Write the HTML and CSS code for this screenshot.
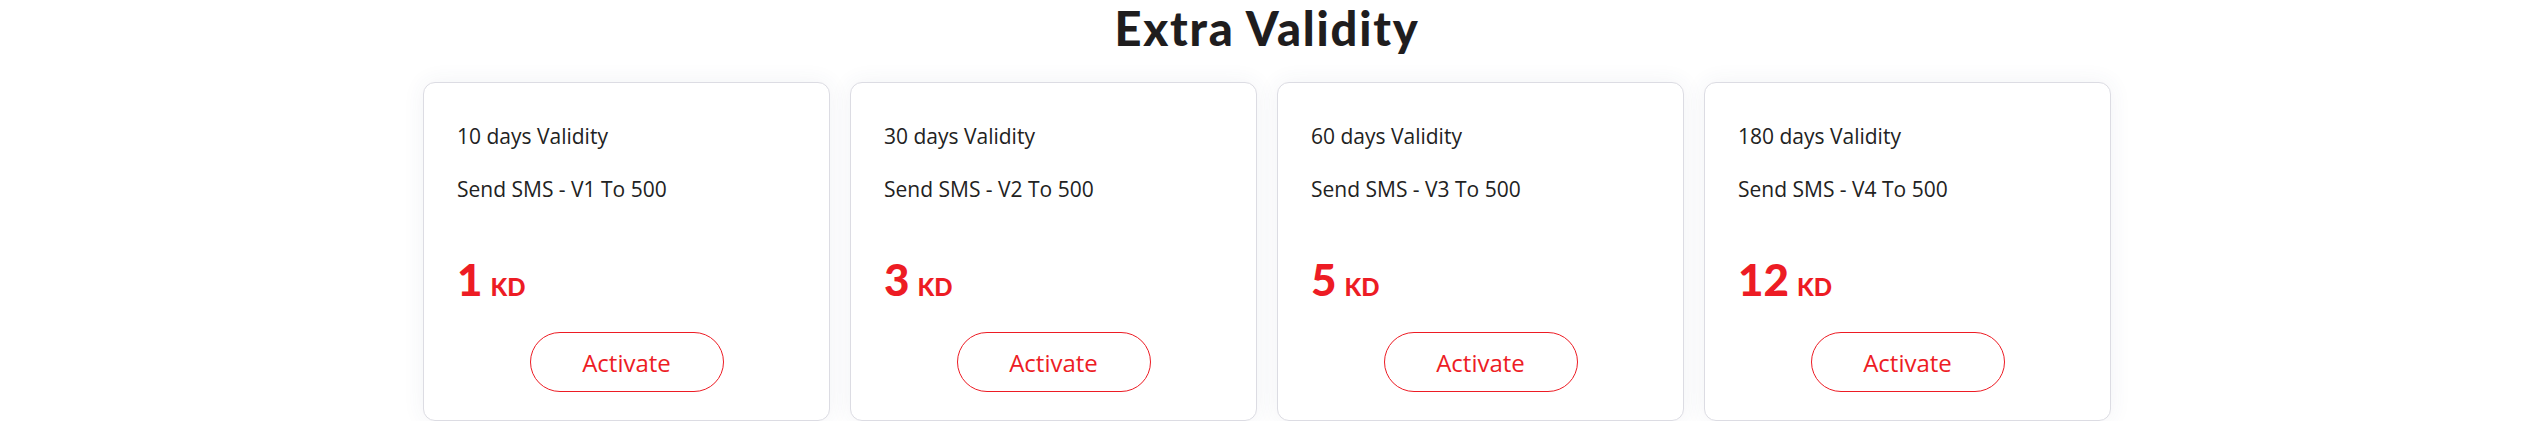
FILE: index.html
```html
<!DOCTYPE html>
<html>
<head>
<meta charset="utf-8">
<link rel="stylesheet" href="styles.css">
</head>
<body>
<section class="validity">
  <h1 class="title">Extra Validity</h1>
  <div class="cards">
    <div class="card">
      <p class="line">10 days Validity</p>
      <p class="line second">Send SMS - V1 To 500</p>
      <div class="price"><span class="amount">1</span><span class="cur">KD</span></div>
      <button class="btn">Activate</button>
    </div>
    <div class="card">
      <p class="line">30 days Validity</p>
      <p class="line second">Send SMS - V2 To 500</p>
      <div class="price"><span class="amount">3</span><span class="cur">KD</span></div>
      <button class="btn">Activate</button>
    </div>
    <div class="card">
      <p class="line">60 days Validity</p>
      <p class="line second">Send SMS - V3 To 500</p>
      <div class="price"><span class="amount">5</span><span class="cur">KD</span></div>
      <button class="btn">Activate</button>
    </div>
    <div class="card">
      <p class="line">180 days Validity</p>
      <p class="line second">Send SMS - V4 To 500</p>
      <div class="price"><span class="amount">12</span><span class="cur">KD</span></div>
      <button class="btn">Activate</button>
    </div>
  </div>
</section>
</body>
</html>
```

FILE: styles.css
```css
html, body {
  margin: 0;
  padding: 0;
  background: #ffffff;
}
body {
  font-family: "Open Sans", "Noto Sans", sans-serif;
  color: #222222;
}
.validity {
  display: flex;
  flex-direction: column;
  align-items: center;
}
.title {
  margin: 0;
  font-family: Lato, "DejaVu Sans", sans-serif;
  font-weight: 900;
  font-size: 47px;
  line-height: 56px;
  color: #1f1d1e;
  letter-spacing: 1.8px;
}
.cards {
  margin-top: 26px;
  width: 1688px;
  display: grid;
  grid-template-columns: repeat(4, 1fr);
  gap: 20px;
}
.card {
  display: flex;
  flex-direction: column;
  align-items: flex-start;
  background: #ffffff;
  border: 1.5px solid #dcdce3;
  border-radius: 12px;
  box-shadow: 0 0 22px rgba(60, 70, 110, 0.07);
  padding: 38px 33px 28px;
}
.line {
  margin: 0;
  font-size: 21px;
  line-height: 30px;
  color: #222222;
}
.second {
  margin-top: 23px;
}
.price {
  margin-top: 51px;
  display: flex;
  align-items: baseline;
  color: #ed1c24;
  font-family: Lato, "DejaVu Sans", sans-serif;
  font-weight: 900;
  line-height: 48px;
}
.amount {
  font-size: 44px;
  letter-spacing: 0;
}
.cur {
  font-size: 24px;
  margin-left: 8px;
}
.btn {
  margin-top: 21px;
  align-self: center;
  width: 194px;
  height: 60px;
  border: 1px solid #ed1c24;
  border-radius: 30px;
  background: #ffffff;
  color: #ed1c24;
  font-family: "Open Sans", "Noto Sans", sans-serif;
  font-size: 24px;
  padding: 0;
  cursor: pointer;
}
```
